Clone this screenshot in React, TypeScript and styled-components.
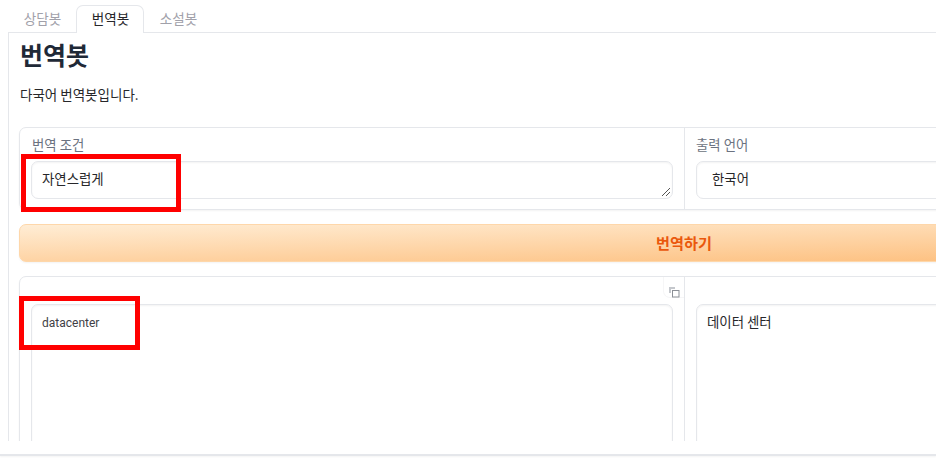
import styled, { createGlobalStyle } from "styled-components";

const Global = createGlobalStyle`
  html, body {
    margin: 0;
    padding: 0;
    background: #fff;
    overflow: hidden;
  }
  body {
    font-family: "Noto Sans CJK KR", "Liberation Sans", sans-serif;
    color: #27272a;
  }
`;

const Page = styled.div`
  position: relative;
  width: 936px;
  height: 469px;
  overflow: hidden;
  background: #fff;
`;

const Clip = styled.div`
  height: 441px;
  overflow: hidden;
  padding-left: 8px;
`;

const TabBar = styled.div`
  display: flex;
  height: 32px;
  padding-top: 5px;
  box-sizing: border-box;
`;

const Tab = styled.div<{ $active?: boolean }>`
  box-sizing: border-box;
  width: 68px;
  height: ${(p) => (p.$active ? "28px" : "27px")};
  padding: 0 0 3px 1px;
  display: flex;
  align-items: center;
  justify-content: center;
  font-size: 13.6px;
  color: ${(p) => (p.$active ? "#27272a" : "#a1a1aa")};
  background: #fff;
  border: 1px solid ${(p) => (p.$active ? "#e5e7eb" : "transparent")};
  border-bottom: none;
  border-radius: 7px 7px 0 0;
  position: relative;
  z-index: 1;
`;

const Panel = styled.div`
  width: 1400px;
  height: 500px;
  box-sizing: border-box;
  border-left: 1px solid #e5e7eb;
  border-top: 1px solid #e5e7eb;
  padding: 0 10px;
`;

const Title = styled.h1`
  margin: 5px 0 0 1px;
  font-size: 25px;
  line-height: 32px;
  font-weight: 700;
  color: #1f2937;
`;

const Description = styled.p`
  margin: 15px 0 0 1px;
  font-size: 13.5px;
  line-height: 18px;
  color: #27272a;
`;

const Group = styled.div`
  display: grid;
  grid-template-columns: 665px 665px;
  width: 1330px;
  box-sizing: border-box;
  border: 1px solid #e5e7eb;
  border-radius: 7px;
  margin-top: 24px;
  box-shadow: 0 1px 2px rgba(0, 0, 0, 0.05);
`;

const OutputGroup = styled(Group)`
  margin-top: 14px;
  height: 300px;
`;

const Cell = styled.div<{ $first?: boolean }>`
  box-sizing: border-box;
  position: relative;
  padding: 7px 11px 10px 11px;
  border-right: ${(p) => (p.$first ? "1px solid #e5e7eb" : "none")};
`;

const OutputCell = styled(Cell)`
  padding-top: 27px;
`;

const FieldLabel = styled.div<{ $inset?: number }>`
  font-size: 13.4px;
  line-height: 18px;
  color: #6b7280;
  margin: 0 0 8px ${(p) => p.$inset ?? 1}px;
`;

const Field = styled.div`
  box-sizing: border-box;
  position: relative;
  border: 1px solid #e5e7eb;
  border-radius: 7px;
  box-shadow: inset 0 1px 2px rgba(0, 0, 0, 0.05);
  background: #fff;
  font-size: 13.4px;
  color: #27272a;
  height: 38px;
  padding: 7px 10px;
  line-height: 18px;
`;

const SelectField = styled(Field)`
  padding-left: 15px;
`;

const OutputField = styled(Field)`
  height: 240px;
  padding-top: 7px;
`;

const LatinText = styled.span`
  font-family: "Roboto", "Liberation Sans", sans-serif;
  font-size: 12px;
  color: #3f3f46;
`;

const ResizeGrip = styled.svg`
  position: absolute;
  right: 1px;
  bottom: 1px;
  width: 10px;
  height: 10px;
`;

const CopyButton = styled.div`
  position: absolute;
  top: 0;
  right: 0;
  box-sizing: border-box;
  width: 21px;
  height: 21px;
  padding: 4px 0 0 3px;
  border-left: 1px solid #f6f6f7;
  border-bottom: 1px solid #f6f6f7;
  border-radius: 0 0 0 7px;
`;

const Submit = styled.button`
  display: block;
  width: 1330px;
  height: 38px;
  margin-top: 14px;
  box-sizing: border-box;
  border: 1px solid #fed7aa;
  border-radius: 7px;
  background: linear-gradient(to bottom right, #ffedd5, #fdba74);
  color: #ea580c;
  font-family: inherit;
  font-size: 15.2px;
  font-weight: 700;
  padding: 0 0 2px;
  box-shadow: 0 1px 2px rgba(0, 0, 0, 0.05);
`;

const Footer = styled.div`
  margin-top: 13px;
  height: 2px;
  background: #e5e7eb;
  box-shadow: 0 1px 2px rgba(0, 0, 0, 0.05);
`;

const Highlight = styled.div<{ $x: number; $y: number; $w: number; $h: number }>`
  position: absolute;
  left: ${(p) => p.$x}px;
  top: ${(p) => p.$y}px;
  width: ${(p) => p.$w}px;
  height: ${(p) => p.$h}px;
  box-sizing: border-box;
  border: 5px solid #ff0000;
  z-index: 5;
`;

export default function App() {
  return (
    <Page>
      <Global />
      <Clip>
        <TabBar>
          <Tab>상담봇</Tab>
          <Tab $active>번역봇</Tab>
          <Tab>소설봇</Tab>
        </TabBar>
        <Panel>
          <Title>번역봇</Title>
          <Description>다국어 번역봇입니다.</Description>

          <Group>
            <Cell $first>
              <FieldLabel>번역 조건</FieldLabel>
              <Field>
                자연스럽게
                <ResizeGrip viewBox="0 0 10 10">
                  <path d="M1 9 L9 1 M5 9 L9 5" stroke="#555" strokeWidth="1" fill="none" />
                </ResizeGrip>
              </Field>
            </Cell>
            <Cell>
              <FieldLabel $inset={0}>출력 언어</FieldLabel>
              <SelectField>한국어</SelectField>
            </Cell>
          </Group>

          <Submit type="button">번역하기</Submit>

          <OutputGroup>
            <OutputCell $first>
              <CopyButton>
                <svg viewBox="0 0 14 14" width="14" height="14" fill="none">
                  <path d="M2 1 H8 V3 H4 V7 H2 Z" fill="#c4c7cc" />
                  <rect x="5.5" y="4.5" width="6.5" height="6.5" stroke="#8b8f96" strokeWidth="1" />
                </svg>
              </CopyButton>
              <OutputField>
                <LatinText>datacenter</LatinText>
              </OutputField>
            </OutputCell>
            <OutputCell>
              <OutputField>데이터 센터</OutputField>
            </OutputCell>
          </OutputGroup>
        </Panel>
      </Clip>
      <Footer />
      <Highlight $x={21} $y={154} $w={160} $h={58} />
      <Highlight $x={19} $y={296} $w={121} $h={54} />
    </Page>
  );
}
